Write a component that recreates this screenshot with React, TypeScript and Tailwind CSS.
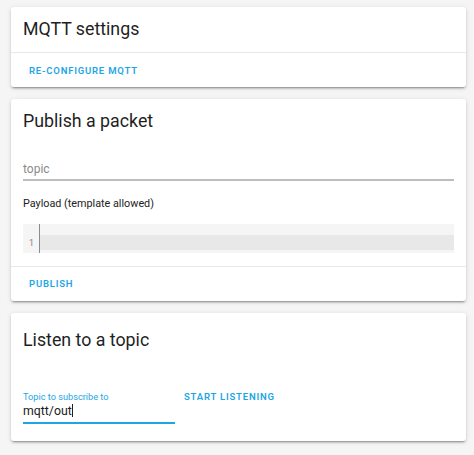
import React from "react";

const font = { fontFamily: "Roboto, 'Noto Sans', sans-serif" };

function Card({ children }: { children: React.ReactNode }) {
  return (
    <div className="bg-white rounded-[3px] shadow-[0_2px_2px_0_rgba(0,0,0,0.14),0_1px_5px_0_rgba(0,0,0,0.12),0_3px_1px_-2px_rgba(0,0,0,0.2)]">
      {children}
    </div>
  );
}

function Title({ children, pt }: { children: React.ReactNode; pt: string }) {
  return (
    <div className={`px-[12px] ${pt} text-[17.8px] leading-[23px] text-[#1f1f1f]`}>{children}</div>
  );
}

function ActionBtn({ children }: { children: React.ReactNode }) {
  return (
    <span className="text-[9.5px] leading-[11px] font-semibold tracking-[0.8px] text-[#1da6e6] uppercase">
      {children}
    </span>
  );
}

function Actions({ children }: { children: React.ReactNode }) {
  return (
    <div className="border-t border-[#e8e8e8] h-[35px] flex items-center px-[18px]">{children}</div>
  );
}

export default function App() {
  return (
    <div style={font} className="min-h-[455px] w-[474px] bg-[#f5f5f5] pt-[7px] pl-[11px] pr-[8px] pb-[15px]">
      <div className="flex flex-col gap-[12px]">
        <Card>
          <div className="pb-[12px]">
            <Title pt="pt-[10px]">MQTT settings</Title>
          </div>
          <Actions>
            <ActionBtn>Re-configure MQTT</ActionBtn>
          </Actions>
        </Card>

        <Card>
          <Title pt="pt-[10px]">Publish a packet</Title>
          <div className="px-[12px] pt-[29px] pb-[13px]">
            <div className="text-[12px] leading-[16px] text-[#8a8a8a]">topic</div>
            <div className="mt-[2px] h-[1.5px] bg-[#bdbdbd]" />
            <div className="mt-[16px] text-[10.8px] leading-[14px] text-[#212121]">Payload (template allowed)</div>
            <div className="mt-[13px] h-[29px] bg-[#f5f5f5] flex">
              <div className="w-[16px] flex items-start justify-end pr-[5px] pt-[13px] text-[9.5px] leading-[11px] text-[#888]">
                1
              </div>
              <div className="w-[1px] bg-[#8c8c8c]" />
              <div className="flex-1 pt-[11px]">
                <div className="h-[15px] bg-[#e8e8e8]" />
              </div>
            </div>
          </div>
          <Actions>
            <ActionBtn>Publish</ActionBtn>
          </Actions>
        </Card>

        <Card>
          <Title pt="pt-[15px]">Listen to a topic</Title>
          <div className="px-[12px] pt-[40px] pb-[17px] flex items-start gap-[9px]">
            <div className="w-[152px]">
              <div className="text-[9.2px] leading-[12px] text-[#1da6e6]">Topic to subscribe to</div>
              <div className="text-[12.3px] leading-[16px] text-[#212121] flex items-center">
                <span>mqtt/out</span>
                <span className="inline-block w-[1px] h-[13px] bg-[#212121] ml-[0.5px]" />
              </div>
              <div className="mt-[3px] h-[2px] bg-[#1da6e6]" />
            </div>
            <ActionBtn>Start listening</ActionBtn>
          </div>
        </Card>
      </div>
    </div>
  );
}
